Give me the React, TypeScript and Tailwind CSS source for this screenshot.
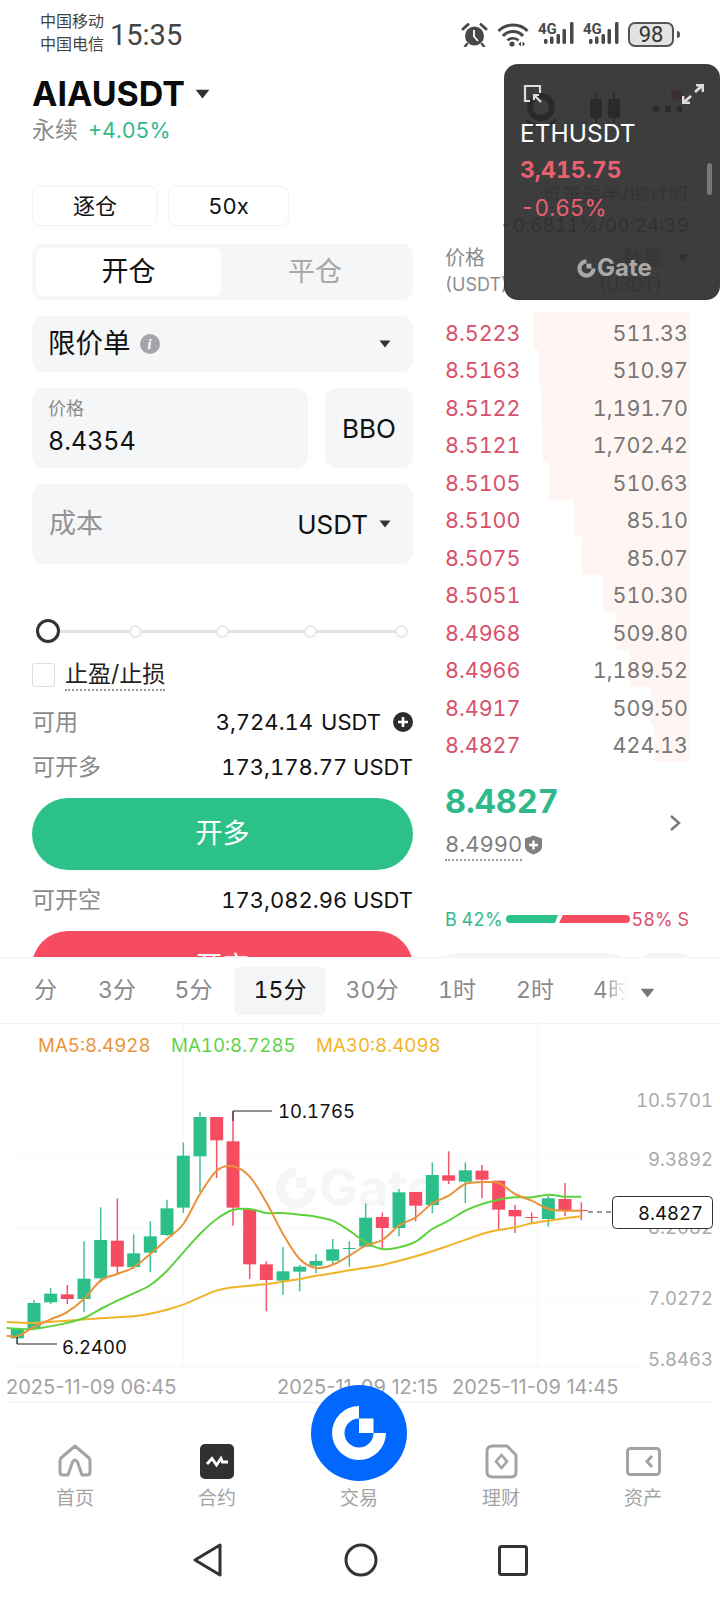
import React from "react";

type C = [number, number, number, number, number, "g" | "r"];
const left: C[] = [
  [52, 750, 778, 750, 795, "g"], [102, 672, 750, 663, 750, "g"], [152, 644, 670, 627, 675, "g"], [202, 646, 660, 618, 675, "r"],
  [252, 599, 660, 487, 700, "g"], [302, 483, 598, 385, 610, "g"], [352, 485, 563, 358, 587, "r"], [401, 523, 564, 466, 570, "g"],
  [451, 472, 521, 427, 580, "g"], [501, 388, 468, 362, 470, "g"], [550, 230, 386, 190, 402, "g"], [600, 114, 232, 98, 340, "g"],
  [650, 114, 184, 114, 297, "r"], [699, 187, 386, 97, 440, "r"], [749, 390, 556, 390, 600, "r"], [799, 556, 603, 547, 697, "r"],
  [849, 577, 605, 505, 647, "g"], [899, 563, 578, 558, 637, "g"], [948, 546, 560, 525, 583, "g"], [998, 511, 545, 480, 555, "g"],
  [1048, 507, 510, 487, 563, "g"],
];
const right: C[] = [
  [77, 416, 503, 373, 503, "g"], [127, 414, 447, 400, 507, "r"], [177, 340, 447, 330, 472, "g"], [227, 339, 380, 339, 427, "r"],
  [277, 288, 378, 250, 402, "g"], [326, 289, 305, 217, 315, "r"], [376, 274, 308, 250, 372, "g"], [426, 275, 302, 258, 358, "r"],
  [476, 305, 392, 305, 455, "r"], [525, 393, 412, 378, 462, "r"], [575, 414, 417, 400, 432, "r"], [625, 358, 420, 350, 443, "g"],
  [675, 360, 393, 312, 412, "r"], [724, 393, 396, 370, 423, "r"],
];
const candles: C[] = [...left, ...right.map((c) => [c[0] + 1020, c[1], c[2], c[3], c[4], c[5]] as C)];

const r = (a: number[][]) => a.map(([x, y]) => [x + 1020, y]);
const ma5 = [[20, 770], [52, 772], [100, 745], [150, 722], [200, 700], [252, 660], [302, 605], [352, 585], [401, 565], [451, 525], [501, 480], [550, 435], [600, 345], [650, 275], [699, 262], [749, 293], [799, 370], [849, 465], [899, 540], [948, 567], [998, 557], ...r([[28, 530], [77, 500], [127, 483], [177, 440], [227, 415], [277, 373], [326, 350], [376, 315], [426, 310], [476, 312], [525, 345], [575, 365], [625, 390], [675, 395], [724, 395]])];
const ma10 = [[20, 747], [100, 750], [200, 732], [252, 717], [302, 690], [352, 665], [401, 643], [451, 618], [501, 575], [550, 520], [600, 465], [650, 420], [699, 393], [749, 390], [799, 402], [849, 402], [899, 407], [948, 413], [998, 425], ...r([[28, 455], [77, 490], [127, 510], [177, 505], [227, 488], [277, 450], [326, 425], [376, 395], [426, 375], [476, 362], [525, 355], [575, 355], [625, 347], [675, 353], [724, 353]])];
const ma30 = [[20, 729], [100, 732], [200, 725], [300, 718], [400, 712], [450, 704], [501, 692], [550, 677], [600, 655], [650, 635], [699, 625], [749, 620], [799, 615], [849, 608], [899, 600], [948, 590], [998, 583], ...r([[28, 574], [127, 558], [227, 532], [326, 500], [426, 465], [476, 453], [525, 445], [575, 433], [625, 425], [675, 418], [724, 412]])];

function smooth(pts: number[][]) {
  const p = pts.map(([x, y]) => [x / 3, y / 3]);
  let d = `M${p[0][0]},${p[0][1]}`;
  for (let i = 0; i < p.length - 1; i++) {
    const a = p[Math.max(i - 1, 0)], b = p[i], c = p[i + 1], e = p[Math.min(i + 2, p.length - 1)];
    d += ` C${b[0] + (c[0] - a[0]) / 6},${b[1] + (c[1] - a[1]) / 6} ${c[0] - (e[0] - b[0]) / 6},${c[1] - (e[1] - b[1]) / 6} ${c[0]},${c[1]}`;
  }
  return d;
}

const orders: [string, string, number][] = [
  ["8.5223", "511.33", 157], ["8.5163", "510.97", 151], ["8.5122", "1,191.70", 149], ["8.5121", "1,702.42", 147],
  ["8.5105", "510.63", 141], ["8.5100", "85.10", 116], ["8.5075", "85.07", 109], ["8.5051", "510.30", 87],
  ["8.4968", "509.80", 74], ["8.4966", "1,189.52", 61], ["8.4917", "509.50", 39], ["8.4827", "424.13", 36],
];

function GateMark({ size, color }: { size: number; color: string }) {
  return (
    <svg width={size} height={size} viewBox="-27 -27 54 54" className="shrink-0">
      <path d="M0,-26 A26,26 0 1 0 26,0 L14,0 A14,14 0 1 1 0,-14 Z" fill={color} />
      <rect x="0" y="-14" width="14" height="14" fill={color} />
    </svg>
  );
}

function Caret({ className }: { className: string }) {
  return (
    <svg viewBox="0 0 12 8" className={className}>
      <path d="M0.5 0.5h11L6 7.5z" fill="currentColor" />
    </svg>
  );
}

function Signal() {
  return (
    <svg width="36" height="24" viewBox="0 0 36 24" className="overflow-visible">
      <text x="0" y="12" fontSize="15" fontWeight="700" fill="#484848" fontFamily="Roboto, sans-serif">4G</text>
      <rect x="6" y="17" width="3.5" height="5" rx="1.4" fill="#484848" />
      <rect x="12" y="14.5" width="3.5" height="7.5" rx="1.4" fill="#484848" />
      <rect x="18.5" y="12" width="3.5" height="10" rx="1.4" fill="#484848" />
      <rect x="24.5" y="7" width="3.5" height="15" rx="1.4" fill="#484848" />
      <rect x="32" y="0" width="3.5" height="22" rx="1.4" fill="#484848" />
    </svg>
  );
}

function StatusBar() {
  return (
    <div className="h-[60px] flex items-start">
      <div className="ml-[40px] mt-[10px] w-[70px] text-[16px] leading-[23px] text-[#444] whitespace-nowrap">
        <div>中国移动</div>
        <div>中国电信</div>
      </div>
      <div className="mt-[17px] text-[29px] leading-[36px] text-[#444] font-['Roboto',sans-serif]">15:35</div>
      <div className="ml-auto mr-[40px] mt-[22px] flex items-start">
        <svg width="27" height="24" viewBox="0 0 27 24" className="mt-[1px]">
          <path d="M2 6 L7 1.5 M25 6 L20 1.5" stroke="#484848" strokeWidth="3" strokeLinecap="round" />
          <path d="M6 21 L4 23.5 M21 21 L23 23.5" stroke="#484848" strokeWidth="2.5" strokeLinecap="round" />
          <circle cx="13.5" cy="13" r="9.5" fill="#484848" />
          <path d="M13 7 V13.5 L17 18" stroke="#fff" strokeWidth="1.8" fill="none" />
        </svg>
        <svg width="32" height="24" viewBox="0 0 32 24" className="ml-[9px] mt-[1px]">
          <path d="M1.5 8 C9 0 23 0 30.5 8" stroke="#484848" strokeWidth="3" fill="none" />
          <path d="M6 13 C11 7 21 7 26 13" stroke="#484848" strokeWidth="3" fill="none" />
          <path d="M10.5 17.5 C13 14.5 19 14.5 21.5 17.5" stroke="#484848" strokeWidth="2.6" fill="none" />
          <circle cx="15" cy="21" r="2.6" fill="#484848" />
          <path d="M24 18.5 v5 l-2.6 -2.5z M25.5 18.5 v5 l2.6 -2.5z" fill="#484848" />
        </svg>
        <div className="ml-[9px]"><Signal /></div>
        <div className="ml-[9px]"><Signal /></div>
        <div className="ml-[9px] flex items-center">
          <div className="w-[46px] h-[25px] rounded-[7px] border-2 border-[#555] bg-[#e3e3e3] flex items-center justify-center text-[22px] leading-none text-[#333] font-['Roboto',sans-serif]">98</div>
          <div className="ml-[3px] w-[3px] h-[7px] rounded-r-sm bg-[#555]" />
        </div>
      </div>
    </div>
  );
}

function Header() {
  return (
    <div className="h-[126px] pl-[32px] pr-[38px] flex justify-between">
      <div>
        <div className="flex items-center mt-[14px]">
          <span className="text-[34px] leading-[40px] font-bold text-[#0b0b0b]">AIAUSDT</span>
          <Caret className="w-[15px] h-[10px] ml-[10px] text-[#333]" />
        </div>
        <div className="flex items-center">
          <span className="text-[23px] leading-[32px] text-[#8c8c8c]">永续</span>
          <span className="ml-[10px] text-[21.5px] leading-[32px] text-[#35b98c]">+4.05%</span>
        </div>
      </div>
      <svg width="160" height="50" viewBox="0 0 160 50" className="mt-[30px]">
        <circle cx="19" cy="17" r="11" fill="none" stroke="#111" strokeWidth="6" />
        <path d="M4 30 l8 6 M34 30 l-8 6" stroke="#111" strokeWidth="3" />
        <path d="M74 3v30M92 3v30" stroke="#111" strokeWidth="2" />
        <rect x="68" y="9" width="12" height="19" rx="2" fill="#111" />
        <rect x="86" y="9" width="12" height="19" rx="2" fill="#111" />
        <rect x="131" y="16" width="6" height="6" fill="#111" />
        <rect x="143" y="16" width="6" height="6" fill="#111" />
        <rect x="155" y="16" width="5" height="6" fill="#111" />
        <circle cx="155" cy="4" r="6" fill="#f0415a" />
      </svg>
    </div>
  );
}

function Row({ label, children }: { label: string; children: React.ReactNode }) {
  return (
    <div className="flex items-center justify-between h-[30px]">
      <span className="text-[23px] leading-[30px] text-[#8a8a8a]">{label}</span>
      {children}
    </div>
  );
}

function LeftCol() {
  return (
    <div className="ml-[32px] w-[381px] shrink-0">
      <div className="flex gap-[10px]">
        <div className="w-[126px] h-[40px] rounded-[8px] border border-[#f1f2f4] flex items-center justify-center text-[22px] text-[#111]">逐仓</div>
        <div className="w-[121px] h-[40px] rounded-[8px] border border-[#f1f2f4] flex items-center justify-center text-[22px] text-[#111]">50x</div>
      </div>
      <div className="mt-[18px] h-[56px] rounded-[10px] bg-[#f5f6f7] p-[4px] flex">
        <div className="w-[185px] rounded-[8px] bg-white flex items-center justify-center text-[27px] text-[#111]">开仓</div>
        <div className="flex-1 flex items-center justify-center text-[27px] text-[#a8a8a8]">平仓</div>
      </div>
      <div className="mt-[16px] h-[56px] rounded-[12px] bg-[#f5f6f7] pl-[16px] pr-[22px] flex items-center">
        <span className="text-[27.5px] text-[#111]">限价单</span>
        <span className="ml-[9px] w-[20px] h-[20px] rounded-full bg-[#a3a5a8] text-white text-[14px] font-bold italic flex items-center justify-center font-['Liberation_Serif',serif]">i</span>
        <Caret className="ml-auto w-[12px] h-[8px] text-[#333]" />
      </div>
      <div className="mt-[16px] flex gap-[17px]">
        <div className="w-[276px] h-[80px] rounded-[12px] bg-[#f5f6f7] pl-[16px] pt-[9px]">
          <div className="text-[18px] leading-[24px] text-[#8c8c8c]">价格</div>
          <div className="text-[25px] leading-[36px] mt-[2px] text-[#111]">8.4354</div>
        </div>
        <div className="flex-1 h-[80px] rounded-[12px] bg-[#f5f6f7] flex items-center justify-center text-[26px] text-[#111]">BBO</div>
      </div>
      <div className="mt-[16px] h-[80px] rounded-[12px] bg-[#f5f6f7] pl-[17px] pr-[22px] flex items-center">
        <span className="text-[27px] text-[#939393]">成本</span>
        <span className="ml-auto text-[26px] text-[#111]">USDT</span>
        <Caret className="ml-[11px] w-[12px] h-[8px] text-[#333]" />
      </div>
      <div className="mt-[55px] h-[24px] relative flex items-center pl-[4px]">
        <div className="absolute left-[16px] w-[353px] top-[11px] h-[3px] bg-[#e3e3e3]" />
        <div className="relative w-[24px] h-[24px] rounded-full border-[3.5px] border-[#333] bg-white" />
        <div className="relative w-[13px] h-[13px] rounded-full border-2 border-[#e8e8e8] bg-white ml-[69px]" />
        <div className="relative w-[13px] h-[13px] rounded-full border-2 border-[#e8e8e8] bg-white ml-[74px]" />
        <div className="relative w-[13px] h-[13px] rounded-full border-2 border-[#e8e8e8] bg-white ml-[75px]" />
        <div className="relative w-[13px] h-[13px] rounded-full border-2 border-[#e8e8e8] bg-white ml-[78px]" />
      </div>
      <div className="mt-[20px] h-[24px] flex items-center">
        <div className="w-[23px] h-[24px] rounded-[3px] border border-[#dedede]" />
        <span className="ml-[10px] text-[23px] leading-[30px] text-[#222] border-b-2 border-dotted border-[#999]">止盈/止损</span>
      </div>
      <div className="mt-[20px]">
        <Row label="可用">
          <span className="flex items-center text-[22px] text-[#111]">
            <span>3,724.14</span>
            <span className="ml-[8px]">USDT</span>
            <svg width="20" height="20" viewBox="0 0 20 20" className="ml-[12px]">
              <circle cx="10" cy="10" r="10" fill="#2c2c2c" />
              <path d="M10 5v10M5 10h10" stroke="#fff" strokeWidth="2.6" />
            </svg>
          </span>
        </Row>
      </div>
      <div className="mt-[15px]">
        <Row label="可开多"><span className="text-[22px] text-[#111]">173,178.77 USDT</span></Row>
      </div>
      <div className="mt-[16px] h-[72px] rounded-full bg-[#2dc18a] flex items-center justify-center text-[27px] text-white">开多</div>
      <div className="mt-[15px]">
        <Row label="可开空"><span className="text-[22px] text-[#111]">173,082.96 USDT</span></Row>
      </div>
      <div className="mt-[16px] h-[72px] rounded-full bg-[#f64c62] flex items-center justify-center text-[27px] text-white">开空</div>
    </div>
  );
}

function RightCol() {
  return (
    <div className="ml-[32px] w-[244px] shrink-0">
      <div className="h-[64px] flex flex-col items-end">
        <div className="text-[20px] leading-[20px] -mt-[3px] text-[#8c8c8c] border-b-2 border-dotted border-[#aaa] pb-[4px]">资金费率/倒计时</div>
        <div className="text-[19px] leading-[24px] mt-[5px] text-[#666] whitespace-nowrap">-0.6811%/00:24:39</div>
      </div>
      <div className="h-[62px] flex justify-between pr-[12px] text-[#8c8c8c]">
        <div>
          <div className="text-[20px] leading-[28px] mt-[-6px]">价格</div>
          <div className="text-[18px] leading-[26px]">(USDT)</div>
        </div>
        <div className="flex flex-col items-end">
          <div className="flex items-center text-[20px] leading-[28px] mt-[-6px]">
            <span>数量</span>
            <Caret className="ml-[14px] mr-[-12px] w-[12px] h-[8px] text-[#666]" />
          </div>
          <div className="text-[18px] leading-[26px] mr-[15px]">(USDT)</div>
        </div>
      </div>
      {orders.map(([p, a, w]) => (
        <div key={p} className="relative h-[37.5px] pt-[4px] pr-[1px] flex items-center justify-between text-[21.5px]">
          <div className="absolute right-[-1px] top-0 bottom-0 bg-[#fff6f4]" style={{ width: w }} />
          <span className="relative text-[#d9506b]">{p}</span>
          <span className="relative text-[#777]">{a}</span>
        </div>
      ))}
      <div className="mt-[19px] text-[32.5px] leading-[42px] font-bold text-[#2fb98a]">8.4827</div>
      <div className="mt-[5px] h-[34px] flex items-center">
        <span className="text-[22px] leading-[30px] text-[#808080] border-b-2 border-dotted border-[#999]">8.4990</span>
        <svg width="19" height="20" viewBox="0 0 19 20" className="ml-[2px]">
          <path d="M9.5 0.5 L18 3.5 V12 Q18 17 9.5 19.5 Q1 17 1 12 V3.5 Z" fill="#808080" />
          <path d="M9.5 5.5v9M5 10h9" stroke="#fff" strokeWidth="2.4" />
        </svg>
        <svg width="14" height="20" viewBox="0 0 14 20" className="ml-auto mr-[7px] -mt-[44px]">
          <path d="M3 3 L11 10 L3 17" fill="none" stroke="#777" strokeWidth="2.4" />
        </svg>
      </div>
      <div className="mt-[45px] h-[24px] flex items-center text-[18px]">
        <span className="text-[#35b98c] whitespace-nowrap">B 42%</span>
        <svg width="124" height="10" viewBox="0 0 124 10" className="ml-[3px] shrink-0">
          <path d="M4 1 H52 L49 9 H4 A4 4 0 0 1 4 1Z" fill="#2dc18a" />
          <path d="M57 1 H120 A4 4 0 0 1 120 9 H53Z" fill="#f64c62" />
        </svg>
        <span className="ml-auto text-[#d9506b] whitespace-nowrap">58% S</span>
      </div>
      <div className="mt-[22px] flex gap-[22px]">
        <div className="w-[175px] h-[40px] rounded-[8px] bg-[#f5f6f7]" />
        <div className="flex-1 h-[40px] rounded-[8px] bg-[#f5f6f7]" />
      </div>
    </div>
  );
}

function Overlay() {
  return (
    <div className="absolute left-[504px] top-[64px] w-[216px] h-[236px] rounded-[14px] bg-[rgba(44,45,46,0.92)]">
      <svg width="20" height="20" viewBox="0 0 20 20" className="absolute left-[19px] top-[20px]">
        <path d="M7 17 H2 V2 H17 V9" fill="none" stroke="#dcdcdc" strokeWidth="2.2" />
        <path d="M18 18 L11 11 M11 16 V11 H16" fill="none" stroke="#dcdcdc" strokeWidth="2.2" />
      </svg>
      <svg width="22" height="20" viewBox="0 0 22 20" className="absolute left-[178px] top-[20px]">
        <path d="M13 8 L21 1 M14 1 H21 V8" fill="none" stroke="#dcdcdc" strokeWidth="2.8" />
        <path d="M9 12 L1 19 M8 19 H1 V12" fill="none" stroke="#dcdcdc" strokeWidth="2.8" />
      </svg>
      <div className="absolute left-[16px] top-[54px] text-[24.5px] leading-[30px] text-white">ETHUSDT</div>
      <div className="absolute left-[16px] top-[91px] text-[23px] leading-[30px] font-bold text-[#e9616f]">3,415.75</div>
      <div className="absolute left-[16px] top-[129px] text-[22.5px] leading-[30px] text-[#e9616f]">-0.65%</div>
      <div className="absolute left-[203px] top-[99px] w-[5px] h-[32px] rounded-full bg-[#777]" />
      <div className="absolute left-[73px] top-[191px] flex items-center">
        <GateMark size={19} color="#a9a9a9" />
        <span className="text-[24px] leading-[26px] font-bold text-[#a9a9a9] ml-[1px]">Gate</span>
      </div>
    </div>
  );
}

function TimeTabs() {
  return (
    <div className="h-[67px] flex items-center border-y border-[#f2f3f4] text-[23px] text-[#8a8a8a] whitespace-nowrap">
      <span className="ml-[10px] w-[71px] text-center">分</span>
      <span className="w-[72px] text-center">3分</span>
      <span className="w-[81px] text-center">5分</span>
      <span className="w-[92px] h-[48px] rounded-[6px] bg-[#f3f5f7] flex items-center justify-center text-[#111]">15分</span>
      <span className="w-[92px] text-center">30分</span>
      <span className="w-[78px] text-center">1时</span>
      <span className="w-[78px] text-center">2时</span>
      <span className="w-[76px] text-center">
        <span className="bg-linear-to-r from-[#8a8a8a] from-30% to-[#ffffff] to-90% bg-clip-text text-transparent">4时</span>
      </span>
      <Caret className="-ml-[10px] mt-[4px] w-[15px] h-[10px] text-[#777]" />
    </div>
  );
}

function Chart() {
  const f = "Inter, sans-serif";
  return (
    <svg width="720" height="290" viewBox="0 0 720 290" className="block overflow-visible">
      {[79, 149, 219, 288].map((y) => <line key={y} x1="15" x2="640" y1={y} y2={y} stroke="#f8f8f8" />)}
      {[183, 537].map((x) => <line key={x} x1={x} x2={x} y1="-56" y2="290" stroke="#f8f8f8" />)}
      <g fill="#f5f6f7">
        <g transform="translate(275,88)"><svg width="42" height="42" viewBox="-27 -27 54 54"><path d="M0,-26 A26,26 0 1 0 26,0 L14,0 A14,14 0 1 1 0,-14 Z" /><rect y="-14" width="14" height="14" /></svg></g>
        <text x="319" y="127" fontSize="52" fontWeight="700" fontFamily={f}>Gate</text>
      </g>
      {candles.map(([x, t, b, wt, wb, c], i) => {
        const col = c === "g" ? "#2cbf8a" : "#f64c62";
        return (
          <g key={i}>
            <line x1={x / 3} x2={x / 3} y1={wt / 3} y2={wb / 3} stroke={c === "g" ? "#45c096" : "#f0566c"} strokeWidth="1.5" />
            <rect x={x / 3 - 6.5} y={t / 3} width="13" height={(b - t) / 3} fill={col} />
          </g>
        );
      })}
      <path d={smooth(ma30)} fill="none" stroke="#f0b429" strokeWidth="2" />
      <path d={smooth(ma10)} fill="none" stroke="#5fd13f" strokeWidth="2" />
      <path d={smooth(ma5)} fill="none" stroke="#e8933a" strokeWidth="2" />
      <path d="M233 42 V32 H272" fill="none" stroke="#222" strokeWidth="1" />
      <text x="278" y="39" fontSize="18.5" fontFamily={f} fill="#111">10.1765</text>
      <path d="M17 258 V265 H57" fill="none" stroke="#222" strokeWidth="1" />
      <text x="62" y="275" fontSize="18.5" fontFamily={f} fill="#111">6.2400</text>
      <g fontSize="18.5" fontFamily={f} fill="#aaaaaa" textAnchor="end">
        <text x="713" y="28">10.5701</text>
        <text x="713" y="87">9.3892</text>
        <text x="713" y="155">8.2082</text>
        <text x="713" y="226">7.0272</text>
        <text x="713" y="287">5.8463</text>
      </g>
      <line x1="588" x2="611" y1="133" y2="133" stroke="#333" strokeDasharray="5 4" />
      <rect x="612.5" y="117.5" width="100" height="32" rx="4" fill="#fff" stroke="#333" />
      <text x="703" y="141" fontSize="18.5" fontFamily={f} fill="#111" textAnchor="end">8.4827</text>
    </svg>
  );
}

function NavItem({ label, children }: { label: string; children?: React.ReactNode }) {
  return (
    <div className="flex flex-col items-center">
      <div className="h-[36px] flex items-center justify-center">{children}</div>
      <div className="mt-[7px] text-[19px] leading-[26px] text-[#a3a3a3]">{label}</div>
    </div>
  );
}

function Nav() {
  return (
    <div className="pl-[4px] pt-[40px] grid grid-cols-[142px_142px_142px_142px_142px] h-[116px]">
      <NavItem label="首页">
        <svg width="34" height="34" viewBox="0 0 34 34">
          <path d="M17 2 L31 14 Q32 15 32 17 V28 Q32 31 29 31 H24 L19.5 18 Q17 14 14.5 18 L10 31 H5 Q2 31 2 28 V17 Q2 15 3 14 Z" fill="none" stroke="#a3a3a3" strokeWidth="3" strokeLinejoin="round" />
        </svg>
      </NavItem>
      <NavItem label="合约">
        <svg width="34" height="35" viewBox="0 0 34 35">
          <rect width="34" height="35" rx="5" fill="#303133" />
          <path d="M7 20 L12 14.5 L16.5 21 L21 14.5 L22.5 18 H28" fill="none" stroke="#fff" strokeWidth="2.8" />
        </svg>
      </NavItem>
      <NavItem label="交易" />
      <NavItem label="理财">
        <svg width="33" height="35" viewBox="0 0 33 35">
          <path d="M8 2 H22 L31 11 V28 Q31 33 26 33 H8 Q2 33 2 28 V7 Q2 2 8 2 Z" fill="none" stroke="#a3a3a3" strokeWidth="3" strokeLinejoin="round" />
          <path d="M16.5 11 L22 17.5 L16.5 24 L11 17.5 Z" fill="none" stroke="#a3a3a3" strokeWidth="2.6" />
        </svg>
      </NavItem>
      <NavItem label="资产">
        <svg width="35" height="29" viewBox="0 0 35 29">
          <rect x="1.5" y="1.5" width="32" height="26" rx="3" fill="none" stroke="#a3a3a3" strokeWidth="3" />
          <path d="M26 9 L21 14.5 L26 20" fill="none" stroke="#a3a3a3" strokeWidth="3" />
        </svg>
      </NavItem>
    </div>
  );
}

export default function App() {
  return (
    <div className="relative w-[720px] h-[1600px] overflow-hidden bg-white tabular-nums font-['Inter','Noto_Sans_CJK_SC',sans-serif]">
      <StatusBar />
      <Header />
      <div className="h-[771px] overflow-hidden flex">
        <LeftCol />
        <RightCol />
      </div>
      <TimeTabs />
      <div className="h-[55px] flex items-start pl-[38px] pt-[9px] text-[18.7px] leading-[26px] whitespace-nowrap">
        <span className="w-[133px] text-[#e8963e]">MA5:8.4928</span>
        <span className="w-[145px] text-[#5fd34a]">MA10:8.7285</span>
        <span className="text-[#f0b429]">MA30:8.4098</span>
      </div>
      <Chart />
      <div className="h-[34px] mx-[6px] pt-[3px] border-b border-[#eeeff0] text-[20px] leading-[30px] text-[#a3a3a3] flex whitespace-nowrap normal-nums">
        <span className="w-[271px]">2025-11-09 06:45</span>
        <span className="w-[175px]">2025-11-09 12:15</span>
        <span>2025-11-09 14:45</span>
      </div>
      <Nav />
      <div className="flex justify-center items-center h-[66px] pt-[16px]">
        <svg width="30" height="34" viewBox="0 0 30 34">
          <path d="M27 2 L2 17 L27 32 Z" fill="none" stroke="#333" strokeWidth="3" strokeLinejoin="round" />
        </svg>
        <svg width="34" height="34" viewBox="0 0 34 34" className="ml-[121px]">
          <circle cx="17" cy="17" r="15" fill="none" stroke="#333" strokeWidth="3" />
        </svg>
        <svg width="30" height="31" viewBox="0 0 30 31" className="ml-[120px]">
          <rect x="1.5" y="1.5" width="27" height="28" rx="2" fill="none" stroke="#333" strokeWidth="3" />
        </svg>
      </div>
      <Overlay />
      <div className="absolute left-[311px] top-[1385px] w-[96px] h-[96px] rounded-full bg-[#0068ff] flex items-center justify-center">
        <GateMark size={56} color="#ffffff" />
      </div>
    </div>
  );
}
